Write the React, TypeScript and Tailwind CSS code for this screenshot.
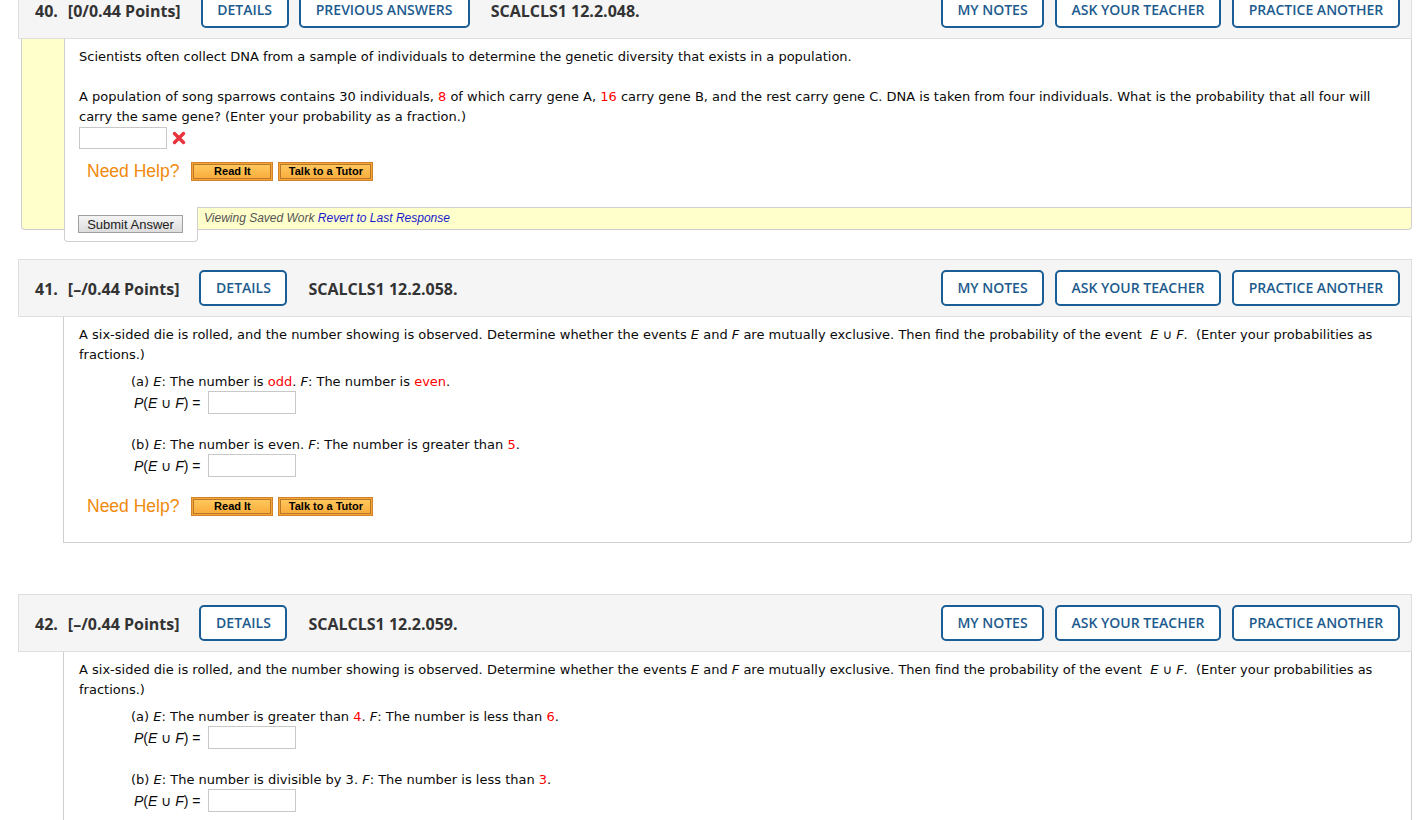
import React from 'react';

const HeaderButton: React.FC<{ label: string; w: string }> = ({ label, w }) => (
    <span className={`flex h-[36px] items-center justify-center rounded-[5px] border-2 border-[#1b5e95] bg-white text-[14px] font-semibold text-[#1d5b8e] ${w}`}>
        {label}
    </span>
);

const QuestionHeader: React.FC<{ num: string; points: string; code: string; prev?: boolean }> = ({ num, points, code, prev }) => (
    <div className="flex h-[58px] items-center border border-[#dedede] bg-[#f5f5f5] pl-[16px] pr-[11px] font-['Open_Sans',sans-serif]">
        <span className="mt-[1px] text-[16px] font-bold text-[#333]">{num}</span>
        <span className="ml-[10px] mt-[1px] text-[16px] font-bold text-[#333]">{points}</span>
        <div className="ml-[20px] flex gap-[10px]">
            <HeaderButton label="DETAILS" w="w-[88px]" />
            {prev && <HeaderButton label="PREVIOUS ANSWERS" w="w-[171px]" />}
        </div>
        <span className="ml-[21px] mt-[1px] text-[16px] font-bold text-[#333]">{code}</span>
        <div className="ml-auto flex gap-[11px]">
            <HeaderButton label="MY NOTES" w="w-[103px]" />
            <HeaderButton label="ASK YOUR TEACHER" w="w-[166px]" />
            <HeaderButton label="PRACTICE ANOTHER" w="w-[168px]" />
        </div>
    </div>
);

const HelpButton: React.FC<{ label: string; w: string }> = ({ label, w }) => (
    <span className={`flex h-[19px] border border-[#d4822a] bg-[#f7a535] p-[1px] ${w}`}>
        <span className="flex flex-1 items-center justify-center border border-[#b8782c] bg-gradient-to-b from-[#ffc75c] to-[#f9ad3c] font-['Liberation_Sans',Arial,sans-serif] text-[11px] font-bold leading-none text-black">
            {label}
        </span>
    </span>
);

const NeedHelp: React.FC = () => (
    <div className="flex items-center pl-[8px]">
        <span className="font-['Liberation_Sans',Arial,sans-serif] text-[17.5px] leading-none text-[#f08a0c]">Need Help?</span>
        <div className="ml-[12px] flex gap-[5px]">
            <HelpButton label="Read It" w="w-[82px]" />
            <HelpButton label="Talk to a Tutor" w="w-[95px]" />
        </div>
    </div>
);

const Red: React.FC<{ children: React.ReactNode }> = ({ children }) => <span className="text-[#ff0000]">{children}</span>;

const AnswerBox: React.FC = () => <span className="inline-block h-[23px] w-[88px] border border-[#c8c8c8] bg-white" />;

const PRow: React.FC = () => (
    <div className="-mt-[1px] flex h-[23px] items-center pl-[3px]">
        <span className="font-['Liberation_Sans',Arial,sans-serif] text-[14px]">
            <i>P</i>(<i>E</i> ∪ <i>F</i>) =
        </span>
        <span className="ml-[8px] flex"><AnswerBox /></span>
    </div>
);

const Part: React.FC<{ letter: string; children: React.ReactNode; first?: boolean }> = ({ letter, children, first }) => (
    <div className={first ? 'mt-[7px] pl-[52px]' : 'mt-[21px] pl-[52px]'}>
        <div>({letter}) {children}</div>
        <PRow />
    </div>
);

const Intro: React.FC = () => (
    <p>
        A six-sided die is rolled, and the number showing is observed. Determine whether the events <i>E</i> and <i>F</i> are mutually exclusive. Then find the probability of the event&nbsp; <i>E</i> ∪ <i>F</i>.&nbsp; (Enter your probabilities as fractions.)
    </p>
);

export default function App() {
    return (
        <div className="min-h-[820px] bg-white font-['DejaVu_Sans',Verdana,sans-serif] text-[13px] leading-[20px] text-[#0a0a0a]">
            <div className="-mt-[19px] w-[1412px] pl-[18px]">
                {/* 40 */}
                <QuestionHeader num="40." points="[0/0.44 Points]" code="SCALCLS1 12.2.048." prev />
                <div className="ml-[3px] rounded-b-[4px] border-x border-b border-[#cfcfcf] bg-[#ffffcc]">
                    <div className="ml-[42px] border-l border-[#cfcfcf] bg-white pb-[26px] pl-[14px] pr-[14px] pt-[8px]">
                        <p>Scientists often collect DNA from a sample of individuals to determine the genetic diversity that exists in a population.</p>
                        <p className="mt-[20px]">
                            A population of song sparrows contains 30 individuals, <Red>8</Red> of which carry gene A, <Red>16</Red> carry gene B, and the rest carry gene C. DNA is taken from four individuals. What is the probability that all four will carry the same gene? (Enter your probability as a fraction.)
                        </p>
                        <div className="flex items-center">
                            <span className="inline-block h-[22px] w-[88px] border border-[#c8c8c8] bg-white" />
                            <svg className="ml-[5px]" width="14" height="14" viewBox="0 0 14 14">
                                <path d="M2.5 2.5 L11.5 11.5 M11.5 2.5 L2.5 11.5" stroke="#e8323c" strokeWidth="3.4" strokeLinecap="round" />
                            </svg>
                        </div>
                        <div className="mt-[13px]">
                            <NeedHelp />
                        </div>
                    </div>
                    <div className="ml-[42px] flex items-start">
                        <div className="relative -mb-[13px] h-[35px] w-[134px] shrink-0 rounded-b-[4px] border-x border-b border-[#cfcfcf] bg-white pl-[13px] pt-[8px]">
                            <span className="flex h-[18px] w-[105px] items-center justify-center border border-[#a0a0a0] bg-gradient-to-b from-[#f4f4f4] to-[#dcdcdc] font-['Liberation_Sans',Arial,sans-serif] text-[13px] leading-none text-[#222]">
                                Submit Answer
                            </span>
                        </div>
                        <div className="h-[22px] flex-1 border-t border-[#cfcfcf] pl-[6px] font-['Liberation_Sans',Arial,sans-serif] text-[12px] italic leading-[20px] text-[#555]">
                            Viewing Saved Work <span className="text-[#1a1acc]">Revert to Last Response</span>
                        </div>
                    </div>
                </div>

                {/* 41 */}
                <div className="mt-[29px]">
                    <QuestionHeader num="41." points="[–/0.44 Points]" code="SCALCLS1 12.2.058." />
                    <div className="ml-[45px] rounded-br-[4px] border-x border-b border-[#cfcfcf] bg-white pb-[26px] pl-[15px] pr-[14px] pt-[8px]">
                        <Intro />
                        <Part letter="a" first>
                            <i>E</i>: The number is <Red>odd</Red>. <i>F</i>: The number is <Red>even</Red>.
                        </Part>
                        <Part letter="b">
                            <i>E</i>: The number is even. <i>F</i>: The number is greater than <Red>5</Red>.
                        </Part>
                        <div className="mt-[20px]">
                            <NeedHelp />
                        </div>
                    </div>
                </div>

                {/* 42 */}
                <div className="mt-[51px]">
                    <QuestionHeader num="42." points="[–/0.44 Points]" code="SCALCLS1 12.2.059." />
                    <div className="ml-[45px] border-x border-b border-[#cfcfcf] bg-white pb-[25px] pl-[15px] pr-[14px] pt-[8px]">
                        <Intro />
                        <Part letter="a" first>
                            <i>E</i>: The number is greater than <Red>4</Red>. <i>F</i>: The number is less than <Red>6</Red>.
                        </Part>
                        <Part letter="b">
                            <i>E</i>: The number is divisible by 3. <i>F</i>: The number is less than <Red>3</Red>.
                        </Part>
                        <div className="mt-[20px]">
                            <NeedHelp />
                        </div>
                    </div>
                </div>
            </div>
        </div>
    );
}
